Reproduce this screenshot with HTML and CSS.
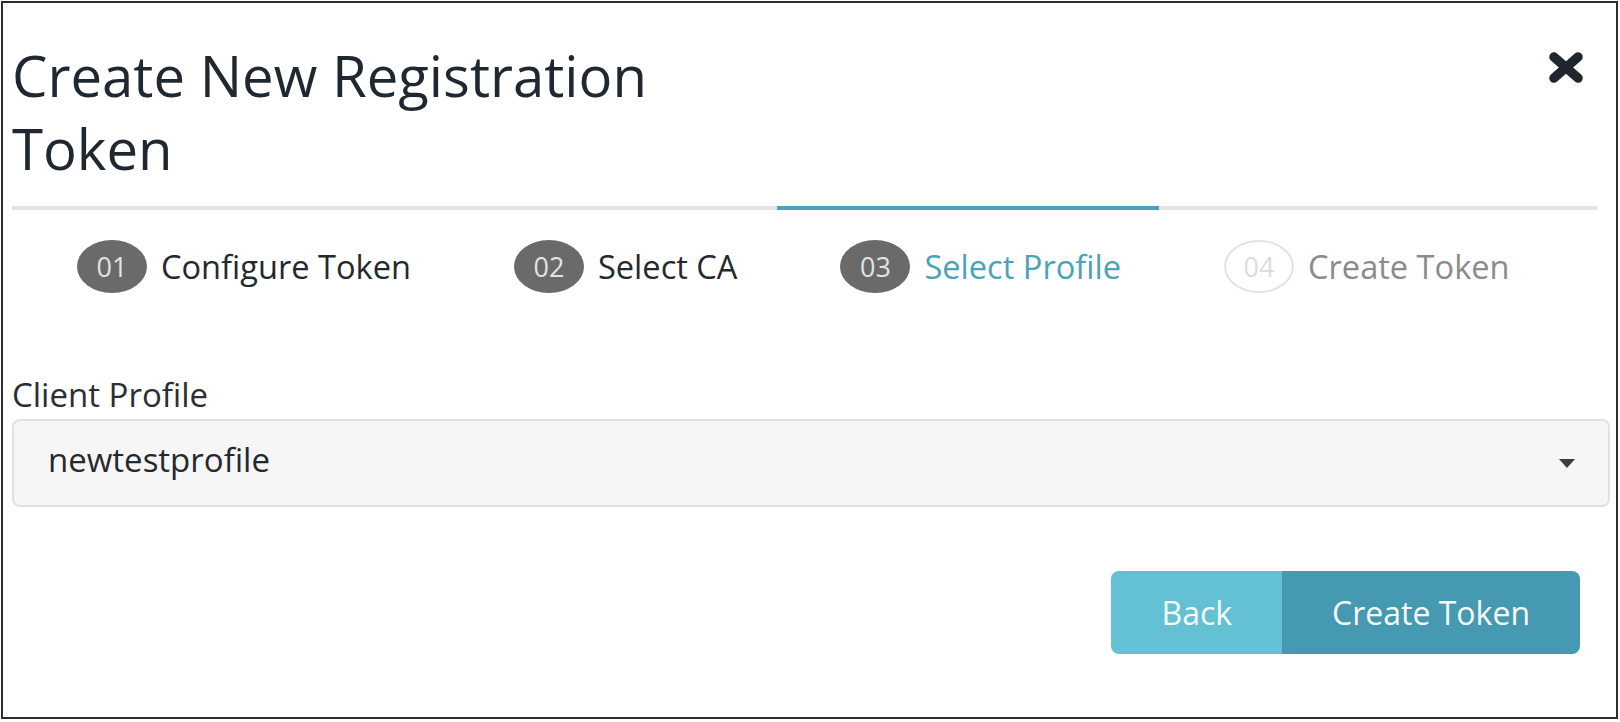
FILE: index.html
```html
<!DOCTYPE html>
<html lang="en">
<head>
<meta charset="utf-8">
<title>Create New Registration Token</title>
<link rel="stylesheet" href="styles.css">
</head>
<body>
<div class="frame">
  <div class="header">
    <h1 class="title">Create New Registration Token</h1>
    <button class="close" aria-label="Close">
      <svg width="34" height="31" viewBox="0 0 34 31">
        <line x1="5" y1="5" x2="29" y2="26" stroke="#1f262e" stroke-width="9.5" stroke-linecap="round"/>
        <line x1="29" y1="5" x2="5" y2="26" stroke="#1f262e" stroke-width="9.5" stroke-linecap="round"/>
      </svg>
    </button>
  </div>

  <div class="progress"><div class="progress-fill"></div></div>

  <div class="steps">
    <div class="step done"><span class="num">01</span><span class="label">Configure Token</span></div>
    <div class="step done"><span class="num">02</span><span class="label">Select CA</span></div>
    <div class="step active"><span class="num">03</span><span class="label">Select Profile</span></div>
    <div class="step todo"><span class="num">04</span><span class="label">Create Token</span></div>
  </div>

  <label class="field-label">Client Profile</label>
  <div class="select">
    <span class="select-value">newtestprofile</span>
    <span class="caret"></span>
  </div>

  <div class="footer">
    <button class="btn btn-back">Back</button>
    <button class="btn btn-create">Create Token</button>
  </div>
</div>
</body>
</html>
```

FILE: styles.css
```css
html, body {
  margin: 0;
  padding: 0;
  background: #ffffff;
}

body {
  font-family: "Open Sans", "Noto Sans", "Liberation Sans", sans-serif;
  color: #222a33;
}

.frame {
  box-sizing: border-box;
  width: 1617px;
  height: 718px;
  margin: 1px 0 0 1px;
  border: 2px solid #2e2e2e;
  padding: 0 0 0 9px;
}

.header {
  display: flex;
  justify-content: space-between;
  align-items: flex-start;
  padding-top: 36px;
}

.title {
  margin: 0;
  width: 680px;
  font-size: 56.3px;
  line-height: 73px;
  font-weight: 400;
  color: #1f2730;
}

.close {
  margin: 13px 33px 0 0;
  padding: 0;
  border: 0;
  background: none;
  width: 34px;
  height: 31px;
  display: block;
}

.close svg {
  display: block;
}

.progress {
  margin-top: 21px;
  width: 1585px;
  height: 4px;
  background: #e3e4e6;
  display: flex;
}

.progress-fill {
  margin-left: 765px;
  width: 382px;
  height: 4px;
  background: #4aa2ba;
}

.steps {
  display: flex;
  align-items: center;
  gap: 103px;
  margin-top: 30px;
  padding-left: 65px;
}

.step {
  display: flex;
  align-items: center;
  gap: 14px;
}

.num {
  box-sizing: border-box;
  width: 70px;
  height: 53px;
  border-radius: 50%;
  display: flex;
  align-items: center;
  justify-content: center;
  font-size: 27px;
  background: #6a6a6a;
  color: #e2e2e2;
}

.label {
  font-size: 32.6px;
  line-height: 44px;
  color: #23292f;
}

.step.active .label {
  color: #4aa3b9;
}

.step.todo .num {
  background: transparent;
  border: 2px solid #e2e2e2;
  color: #dcdcdc;
}

.step.todo .label {
  color: #8b8b8b;
}

.field-label {
  display: block;
  margin-top: 80px;
  font-size: 33px;
  line-height: 44px;
  color: #2a2f35;
}

.select {
  box-sizing: border-box;
  margin-top: 2px;
  width: 1598px;
  height: 88px;
  background: #f6f6f6;
  border: 2px solid #e1e1e1;
  border-radius: 8px;
  display: flex;
  align-items: center;
  padding: 0 33px 6px 34px;
}

.select-value {
  font-size: 33px;
  line-height: 44px;
  color: #25292e;
}

.caret {
  margin-left: auto;
  margin-top: 6px;
  width: 0;
  height: 0;
  border-left: 8.5px solid transparent;
  border-right: 8.5px solid transparent;
  border-top: 9px solid #3d3d3d;
}

.footer {
  width: 1598px;
  display: flex;
  justify-content: flex-end;
  margin-top: 64px;
  padding-right: 30px;
  box-sizing: border-box;
}

.btn {
  height: 83px;
  padding: 0 50px;
  border: 0;
  font-family: "Open Sans", "Noto Sans", "Liberation Sans", sans-serif;
  font-size: 32px;
  color: #f7f9fa;
  cursor: pointer;
}

.btn-back {
  background: #64c1d3;
  border-radius: 8px 0 0 8px;
}

.btn-create {
  background: #4599b0;
  border-radius: 0 8px 8px 0;
}
```
